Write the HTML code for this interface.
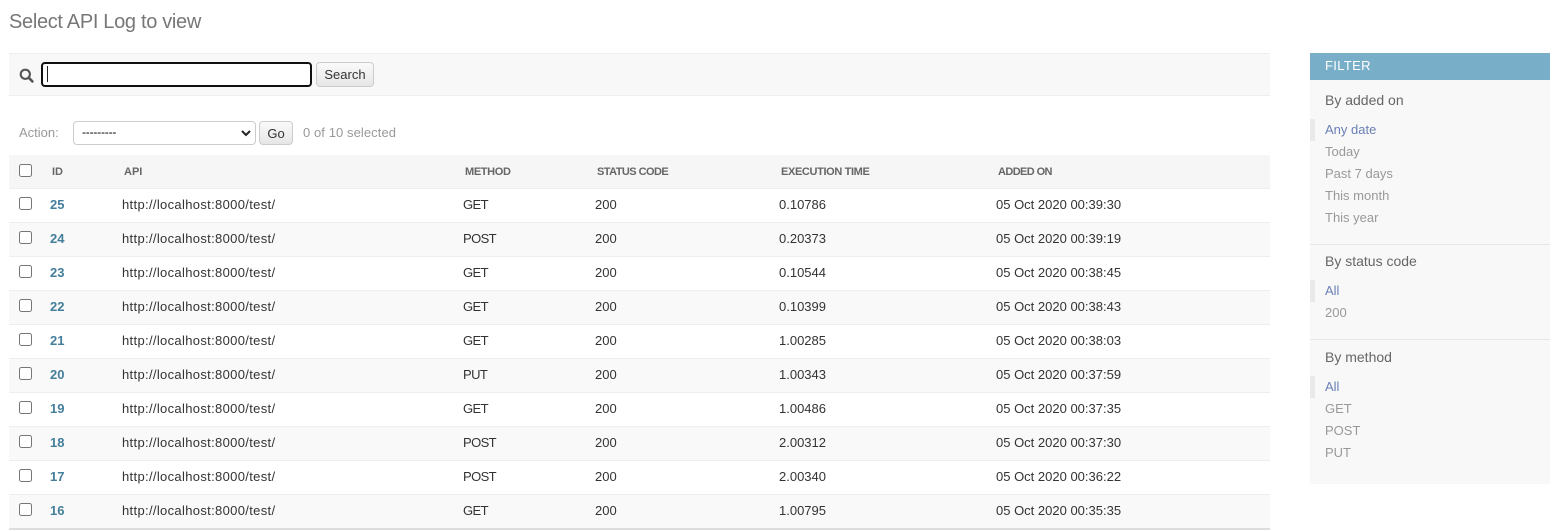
<!DOCTYPE html>
<html><head><meta charset="utf-8"><style>
html,body{margin:0;padding:0;width:1563px;height:531px;overflow:hidden;background:#fff;font-family:"Liberation Sans",sans-serif;font-size:13px;color:#333}
.a{position:absolute;white-space:nowrap}
.row{position:absolute;left:9px;width:1261px;height:33px;border-bottom:1px solid #eee}
.row.alt{background:#f9f9f9}
.row span{position:absolute;top:8px;line-height:15px;white-space:nowrap}
.row span.u{left:113px;letter-spacing:.33px}
.row span.m{left:454px;letter-spacing:-.6px}
.row i{position:absolute;left:10px;top:8px;width:11px;height:11px;border:1px solid #767676;border-radius:2.5px;background:#fff}
.row b{position:absolute;left:41px;top:8px;line-height:15px;color:#447e9b}
.th{position:absolute;top:166px;font-size:11px;line-height:13px;font-weight:bold;color:#666;white-space:nowrap}
.f{position:absolute;left:1325px;line-height:16px;white-space:nowrap;color:#999}
.h{position:absolute;left:1325px;font-size:14px;line-height:18px;color:#666;white-space:nowrap}
.sel{color:#6a7fb5}
.mark{position:absolute;left:1310px;width:5px;height:22px;background:#e9e9e9}
.sep{position:absolute;left:1310px;width:240px;height:1px;background:#e7e7e7}
</style></head><body>
<div class="a" style="left:9px;top:10px;font-size:20px;line-height:24px;color:#777;letter-spacing:-.32px">Select API Log to view</div>

<div class="a" style="left:9px;top:53px;width:1261px;height:41px;background:#f8f8f8;border-top:1px solid #eee;border-bottom:1px solid #eee"></div>
<svg class="a" style="left:19px;top:68px" width="16" height="16" viewBox="0 0 16 16"><circle cx="6.3" cy="6.3" r="4.6" fill="none" stroke="#555" stroke-width="2.1"/><path d="M9.8 9.8l3.6 3.6" stroke="#555" stroke-width="2.6" stroke-linecap="round"/></svg>
<div class="a" style="left:41px;top:62px;width:267px;height:21px;border:2px solid #101010;border-radius:4px;background:#fff"></div>
<div class="a" style="left:47px;top:66px;width:1px;height:16px;background:#222"></div>
<div class="a" style="left:316px;top:62px;width:56px;height:23px;border:1px solid #ccc;border-radius:4px;background:linear-gradient(#fafafa,#e6e6e6);text-align:center;line-height:23px;color:#333">Search</div>

<div class="a" style="left:19px;top:125px;line-height:15px;color:#999">Action:</div>
<div class="a" style="left:73px;top:121px;width:181px;height:22px;border:1px solid #ccc;border-radius:4px;background:#fff"></div>
<div class="a" style="left:82px;top:125px;line-height:15px;color:#000;font-size:12px;letter-spacing:-.2px">---------</div>
<svg class="a" style="left:241px;top:129px" width="10" height="8" viewBox="0 0 10 8"><path d="M1 2l4 4 4-4" fill="none" stroke="#222" stroke-width="2"/></svg>
<div class="a" style="left:259px;top:121px;width:32px;height:22px;border:1px solid #ccc;border-radius:4px;background:linear-gradient(#fafafa,#e6e6e6);text-align:center;line-height:24px;color:#333">Go</div>
<div class="a" style="left:303px;top:125px;line-height:15px;color:#999;letter-spacing:.08px">0 of 10 selected</div>

<div class="a" style="left:9px;top:155px;width:1261px;height:33px;background:#f6f6f6;border-bottom:1px solid #eee"></div>
<div class="a" style="left:19px;top:164px;width:11px;height:11px;border:1px solid #767676;border-radius:2.5px;background:#fff"></div>
<div class="th" style="left:52px">ID</div>
<div class="th" style="left:124px">API</div>
<div class="th" style="left:465px;letter-spacing:-.35px">METHOD</div>
<div class="th" style="left:597px;letter-spacing:-.55px">STATUS CODE</div>
<div class="th" style="left:781px;letter-spacing:-.36px">EXECUTION TIME</div>
<div class="th" style="left:998px;letter-spacing:-.6px">ADDED ON</div>

<div class="row" style="top:189px"><i></i><b>25</b><span class="u">http://localhost:8000/test/</span><span class="m">GET</span><span style="left:586px">200</span><span style="left:770px">0.10786</span><span style="left:987px">05 Oct 2020 00:39:30</span></div>
<div class="row alt" style="top:223px"><i></i><b>24</b><span class="u">http://localhost:8000/test/</span><span class="m">POST</span><span style="left:586px">200</span><span style="left:770px">0.20373</span><span style="left:987px">05 Oct 2020 00:39:19</span></div>
<div class="row" style="top:257px"><i></i><b>23</b><span class="u">http://localhost:8000/test/</span><span class="m">GET</span><span style="left:586px">200</span><span style="left:770px">0.10544</span><span style="left:987px">05 Oct 2020 00:38:45</span></div>
<div class="row alt" style="top:291px"><i></i><b>22</b><span class="u">http://localhost:8000/test/</span><span class="m">GET</span><span style="left:586px">200</span><span style="left:770px">0.10399</span><span style="left:987px">05 Oct 2020 00:38:43</span></div>
<div class="row" style="top:325px"><i></i><b>21</b><span class="u">http://localhost:8000/test/</span><span class="m">GET</span><span style="left:586px">200</span><span style="left:770px">1.00285</span><span style="left:987px">05 Oct 2020 00:38:03</span></div>
<div class="row alt" style="top:359px"><i></i><b>20</b><span class="u">http://localhost:8000/test/</span><span class="m">PUT</span><span style="left:586px">200</span><span style="left:770px">1.00343</span><span style="left:987px">05 Oct 2020 00:37:59</span></div>
<div class="row" style="top:393px"><i></i><b>19</b><span class="u">http://localhost:8000/test/</span><span class="m">GET</span><span style="left:586px">200</span><span style="left:770px">1.00486</span><span style="left:987px">05 Oct 2020 00:37:35</span></div>
<div class="row alt" style="top:427px"><i></i><b>18</b><span class="u">http://localhost:8000/test/</span><span class="m">POST</span><span style="left:586px">200</span><span style="left:770px">2.00312</span><span style="left:987px">05 Oct 2020 00:37:30</span></div>
<div class="row" style="top:461px"><i></i><b>17</b><span class="u">http://localhost:8000/test/</span><span class="m">POST</span><span style="left:586px">200</span><span style="left:770px">2.00340</span><span style="left:987px">05 Oct 2020 00:36:22</span></div>
<div class="row alt" style="top:495px;height:33px;border-bottom:2px solid #ddd"><i></i><b>16</b><span class="u">http://localhost:8000/test/</span><span class="m">GET</span><span style="left:586px">200</span><span style="left:770px">1.00795</span><span style="left:987px">05 Oct 2020 00:35:35</span></div>

<div class="a" style="left:1310px;top:53px;width:240px;height:431px;background:#f8f8f8"></div>
<div class="a" style="left:1310px;top:53px;width:225px;padding-left:15px;height:27px;background:#79aec8;color:#fff;font-size:13px;line-height:26px;letter-spacing:.35px">FILTER</div>
<div class="h" style="top:91px">By added on</div>
<div class="mark" style="top:119px"></div>
<div class="f sel" style="top:122px">Any date</div>
<div class="f" style="top:144px">Today</div>
<div class="f" style="top:166px">Past 7 days</div>
<div class="f" style="top:188px">This month</div>
<div class="f" style="top:210px">This year</div>
<div class="sep" style="top:244px"></div>
<div class="h" style="top:252px">By status code</div>
<div class="mark" style="top:280px"></div>
<div class="f sel" style="top:283px">All</div>
<div class="f" style="top:305px">200</div>
<div class="sep" style="top:339px"></div>
<div class="h" style="top:348px">By method</div>
<div class="mark" style="top:376px"></div>
<div class="f sel" style="top:379px">All</div>
<div class="f" style="top:401px">GET</div>
<div class="f" style="top:423px">POST</div>
<div class="f" style="top:445px">PUT</div>
</body></html>
